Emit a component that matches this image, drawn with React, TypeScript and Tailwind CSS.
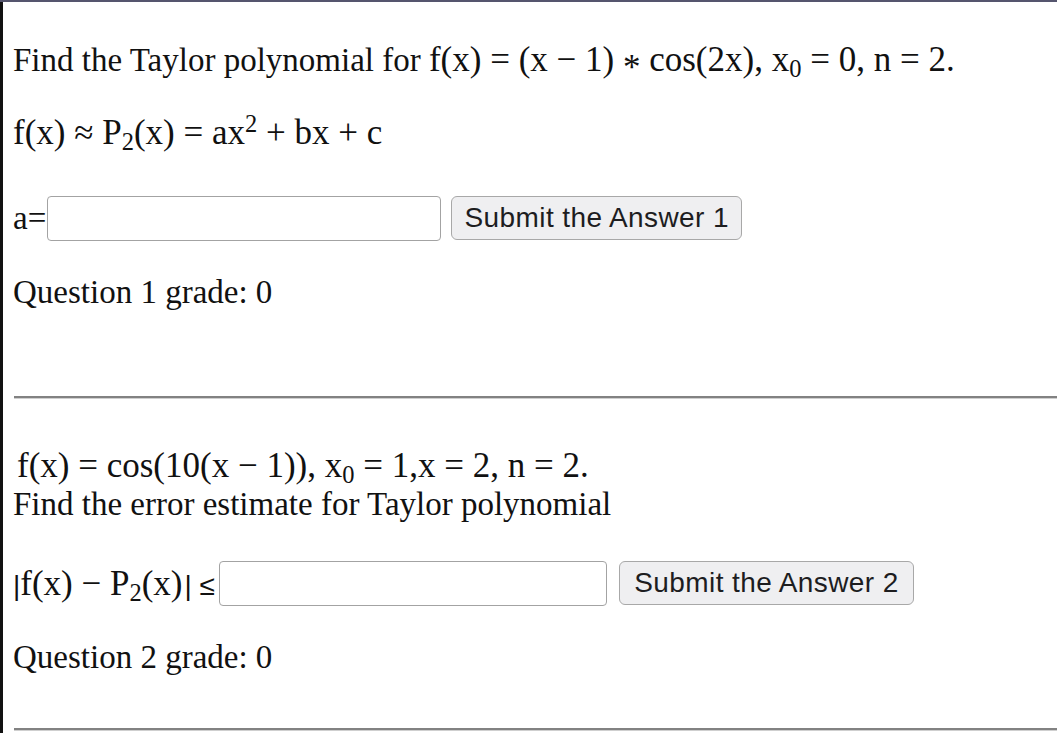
import React from 'react'

const serif = { fontFamily: '"Liberation Serif", "Times New Roman", serif' }
const sans = { fontFamily: '"Liberation Sans", Arial, sans-serif' }

function Sub({ children }: { children: React.ReactNode }) {
  return <sub className="text-[0.7em] leading-none">{children}</sub>
}

// inline math, set a touch larger than the text around it
function M({ children }: { children: React.ReactNode }) {
  return <span className="text-[35px]">{children}</span>
}

function AnswerRow({ label, inputClass, buttonClass, n }: {
  label: React.ReactNode
  inputClass: string
  buttonClass: string
  n: number
}) {
  return (
    <div className="flex items-center h-[46px]">
      <span className="text-[33px] leading-none">{label}</span>
      <input
        type="text"
        className={`h-[45px] rounded-[4px] border border-[#a3a3a3] bg-white outline-none ${inputClass}`}
      />
      <button
        className={`h-[44px] rounded-[6px] border border-[#a8a8a8] bg-[#efeff1] text-[#1d1d1f] text-[28px] tracking-[0.4px] ${buttonClass}`}
        style={sans}
      >
        Submit the Answer {n}
      </button>
    </div>
  )
}

function Rule({ className }: { className: string }) {
  return <div className={`h-[3px] border-t-2 border-b border-t-[#828282] border-b-[#cfcfcf] ${className}`} />
}

export default function App() {
  return (
    <div className="min-h-[733px] bg-white overflow-hidden border-t-2 border-[#55556e]">
      <div
        className="min-h-[731px] border-l-[3px] border-[#111] pl-[10px] text-[#111] text-[33px] leading-[38px]"
        style={serif}
      >
        {/* Question 1 */}
        <p className="pt-[39px] whitespace-nowrap">
          Find the Taylor polynomial for{' '}
          <M>
            f(x) = (x − 1) <span className="relative top-[0.22em]">*</span> cos(2x), x<Sub>0</Sub> = 0, n = 2.
          </M>
        </p>
        <p className="mt-[35px]">
          <M>
            f(x) ≈ P<Sub>2</Sub>(x) = ax<sup className="text-[0.7em] leading-none">2</sup> + bx + c
          </M>
        </p>

        <div className="mt-[43px]">
          <AnswerRow
            label="a="
            n={1}
            inputClass="w-[394px] ml-[1px]"
            buttonClass="w-[291px] ml-[10px]"
          />
        </div>

        <p className="mt-[32px]">Question 1 grade: 0</p>

        <Rule className="mt-[85px] ml-[1px]" />

        {/* Question 2 */}
        <div className="mt-[48px] pl-[4px] whitespace-nowrap">
          <M>
            f(x) = cos(10(x − 1)), x<Sub>0</Sub> = 1,x = 2, n = 2.
          </M>
        </div>
        <div className="leading-[39px]">Find the error estimate for Taylor polynomial</div>

        <div className="mt-[36px]">
          <AnswerRow
            label={
              <span className="inline-flex items-baseline w-[206px] whitespace-nowrap">
                <span style={sans} className="text-[28px]">|</span>
                <M>f(x) − P<Sub>2</Sub>(x)</M>
                <span style={sans} className="text-[28px] ml-[2px]">| ≤</span>
              </span>
            }
            n={2}
            inputClass="w-[388px]"
            buttonClass="w-[295px] ml-[12px]"
          />
        </div>

        <p className="mt-[32px]">Question 2 grade: 0</p>

        <Rule className="mt-[52px] ml-[1px]" />
      </div>
    </div>
  )
}
